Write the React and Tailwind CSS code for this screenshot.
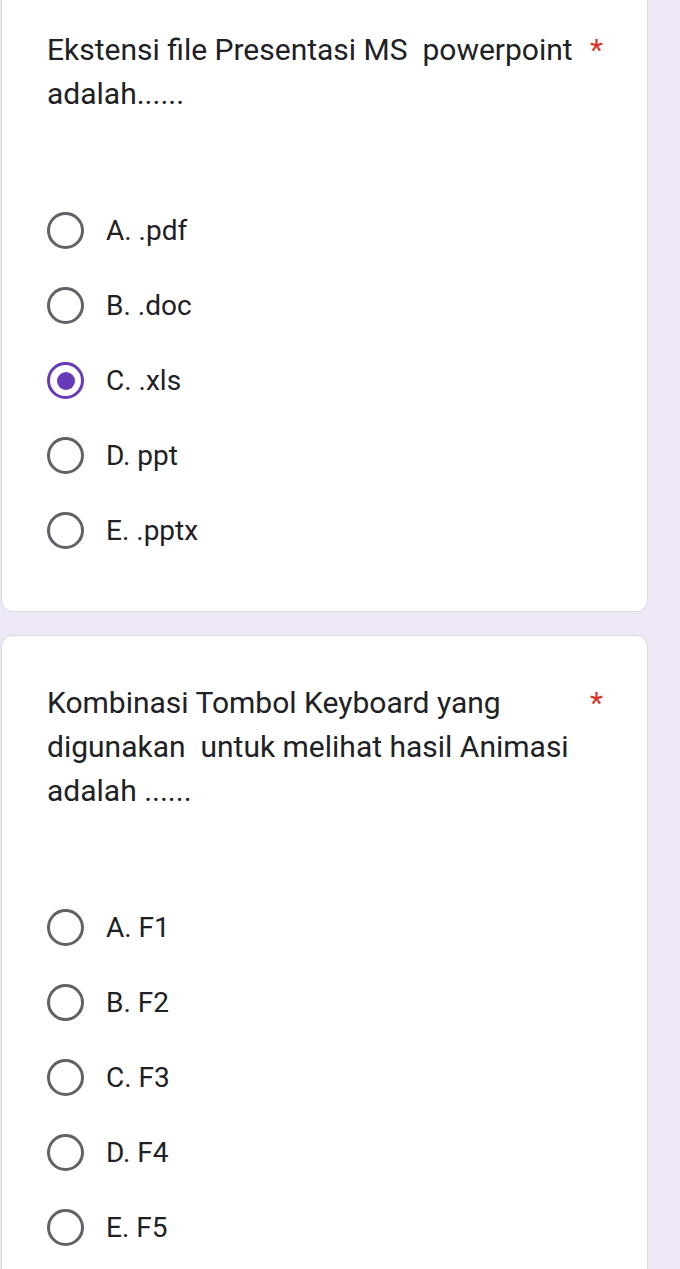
import React from 'react';

const questions = [
  {
    id: 1,
    text: 'Ekstensi file Presentasi MS  powerpoint adalah......',
    options: ['A. .pdf', 'B. .doc', 'C. .xls', 'D. ppt', 'E. .pptx'],
    selected: 2,
    first: true,
  },
  {
    id: 2,
    text: 'Kombinasi Tombol Keyboard yang digunakan  untuk melihat hasil Animasi adalah ......',
    options: ['A. F1', 'B. F2', 'C. F3', 'D. F4', 'E. F5'],
    selected: -1,
  },
];

const Radio = ({ checked }) =>
  checked ? (
    <span className="flex h-[37px] w-[37px] shrink-0 items-center justify-center rounded-full border-[3px] border-[#673ab7]">
      <span className="h-[18px] w-[18px] rounded-full bg-[#673ab7]" />
    </span>
  ) : (
    <span className="h-[37px] w-[37px] shrink-0 rounded-full border-[3px] border-[#5f6368]" />
  );

const QuestionCard = ({ q }) => (
  <div
    className={
      'w-[647px] rounded-[12px] border border-[#dadce0] bg-white pl-[45px] pr-[44px] ' +
      (q.first ? '-mt-6 pt-[51px] pb-[43px]' : 'mt-[23px] pt-[45px] pb-[45px]')
    }
  >
    <div className="flex items-start">
      <p className="w-[540px] whitespace-pre-wrap text-[30px] leading-[44px] text-[#202124]">{q.text}</p>
      <span className="ml-auto mt-[2px] text-[30px] leading-[40px] text-[#d93025]">*</span>
    </div>
    <div className="mt-[77px] flex flex-col">
      {q.options.map((opt, i) => (
        <label key={opt} className="flex h-[75px] items-center gap-[22px]">
          <Radio checked={i === q.selected} />
          <span className="text-[28px] text-[#202124]">{opt}</span>
        </label>
      ))}
    </div>
  </div>
);

export default function App() {
  return (
    <div
      className="h-[1269px] w-[680px] overflow-hidden bg-[#ede7f6] pl-px"
      style={{ fontFamily: 'Roboto, "Noto Sans", sans-serif' }}
    >
      {questions.map((q) => (
        <QuestionCard key={q.id} q={q} />
      ))}
    </div>
  );
}
